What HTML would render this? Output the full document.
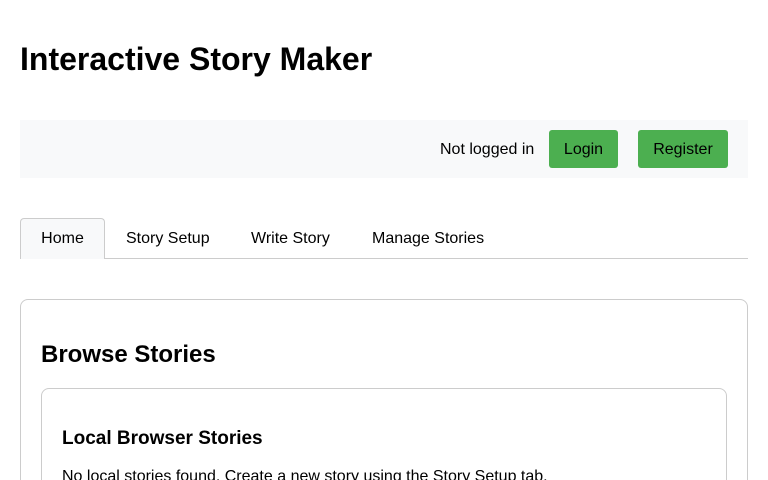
<!DOCTYPE html>
<html style="width:768px;height:480px;overflow:hidden"><head><style>
*{box-sizing:border-box;margin:0;padding:0}
body{width:768px;height:480px;overflow:hidden;background:#fff;font-family:"Liberation Sans",sans-serif;color:#000;position:relative}
.a{position:absolute}
h1{position:absolute;left:20px;top:40px;font-size:32px;font-weight:bold;line-height:38px}
.bar{left:20px;top:120px;width:728px;height:58px;background:#f8f9fa}
.btn{background:#4caf50;border-radius:3px;height:38px;top:130px;font-size:16px;line-height:40px;text-align:center}
.tabs{left:20px;top:258px;width:728px;height:1px;background:#ccc}
.tab{top:218px;height:41px;font-size:16px;line-height:42px}
.box{border:1px solid #ccc;border-radius:8px}
</style></head><body>
<h1>Interactive Story Maker</h1>
<div class="a bar"></div>
<div class="a" style="left:440px;top:140px;font-size:16px;line-height:20px">Not logged in</div>
<div class="a btn" style="left:549px;width:69px">Login</div>
<div class="a btn" style="left:638px;width:90px">Register</div>
<div class="a tabs"></div>
<div class="a tab" style="left:20px;width:85px;background:#f8f9fa;border:1px solid #ccc;border-bottom:none;border-radius:4px 4px 0 0;text-align:center;line-height:39px">Home</div>
<div class="a tab" style="left:126px">Story Setup</div>
<div class="a tab" style="left:251px">Write Story</div>
<div class="a tab" style="left:372px">Manage Stories</div>
<div class="a box" style="left:20px;top:299px;width:728px;height:190px"></div>
<div class="a" style="left:41px;top:340px;font-size:24px;font-weight:bold;line-height:30px">Browse Stories</div>
<div class="a box" style="left:41px;top:388px;width:686px;height:100px"></div>
<div class="a" style="left:62px;top:427px;font-size:19px;font-weight:bold;line-height:24px">Local Browser Stories</div>
<div class="a" style="left:62px;top:467px;font-size:16px;line-height:20px">No local stories found. Create a new story using the Story Setup tab.</div>
</body></html>
